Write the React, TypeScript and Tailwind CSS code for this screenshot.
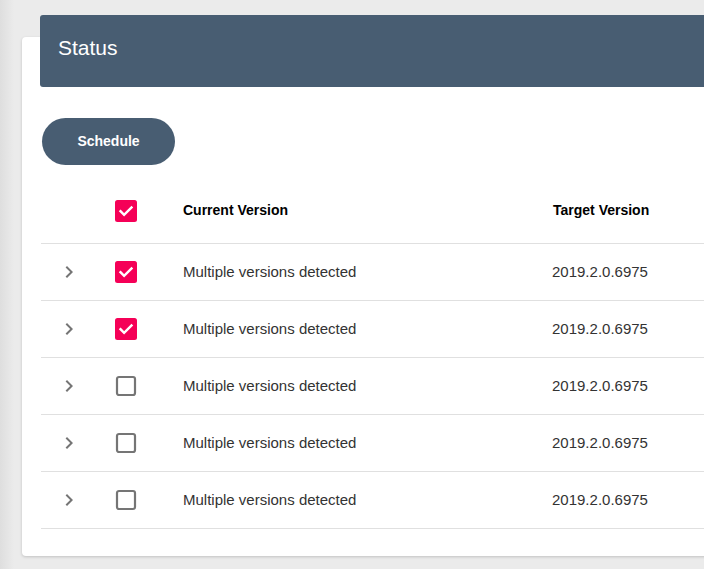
import React from 'react';

interface Row {
  current: string;
  target: string;
  checked: boolean;
}

const rows: Row[] = [
  { current: 'Multiple versions detected', target: '2019.2.0.6975', checked: true },
  { current: 'Multiple versions detected', target: '2019.2.0.6975', checked: true },
  { current: 'Multiple versions detected', target: '2019.2.0.6975', checked: false },
  { current: 'Multiple versions detected', target: '2019.2.0.6975', checked: false },
  { current: 'Multiple versions detected', target: '2019.2.0.6975', checked: false },
];

function CheckBox({ checked }: { checked: boolean }) {
  if (checked) {
    return (
      <svg width="22" height="22" viewBox="0 0 22 22">
        <rect x="0" y="0" width="22" height="22" rx="2.5" fill="#f50057" />
        <path d="M5.5 11.2l3.6 3.6 7.4-7.4" fill="none" stroke="#fff" strokeWidth="2.4" strokeLinecap="square" />
      </svg>
    );
  }
  return (
    <svg width="22" height="22" viewBox="0 0 22 22">
      <rect x="2" y="2" width="18" height="18" rx="2" fill="none" stroke="#757575" strokeWidth="2.2" />
    </svg>
  );
}

function Chevron() {
  return (
    <svg width="24" height="24" viewBox="0 0 24 24" fill="#757575">
      <path d="M10 6L8.59 7.41 13.17 12l-4.58 4.59L10 18l6-6z" />
    </svg>
  );
}

export default function App() {
  return (
    <div
      className="w-[704px] h-[569px] overflow-hidden bg-[linear-gradient(to_right,#dedede,#ebebeb_14px)] pt-[37px] pl-[22px]"
      style={{ fontFamily: '"Liberation Sans", Arial, sans-serif' }}
    >
      <div className="flow-root w-[760px] h-[519px] bg-white rounded-[4px] shadow-[0_1px_3px_rgba(0,0,0,0.18)] pl-[18px]">
        <div className="-mt-[22px] h-[72px] bg-[#485d72] rounded-[3px] flex items-center pl-[18px] pb-[6px]">
          <h1 className="text-white text-[21px]">Status</h1>
        </div>

        <button className="mt-[31px] ml-[2px] w-[133px] h-[47px] rounded-full bg-[#485d72] text-white text-[14px] font-bold">
          Schedule
        </button>

        <div className="mt-[21px] ml-[1px]">
          <div className="flex items-center h-[58px] pb-[8px] border-b border-[#e0e0e0]">
            <div className="w-[60px]" />
            <div className="w-[82px] pl-[14px] flex">
              <CheckBox checked />
            </div>
            <div className="w-[370px] text-[14px] font-bold text-black">Current Version</div>
            <div className="text-[14px] font-bold text-black">Target Version</div>
          </div>
          {rows.map((row, i) => (
            <div key={i} className="flex items-center h-[57px] border-b border-[#e0e0e0]">
              <div className="w-[60px] pl-[16px] flex">
                <Chevron />
              </div>
              <div className="w-[82px] pl-[14px] flex">
                <CheckBox checked={row.checked} />
              </div>
              <div className="w-[369px] text-[15px] text-[#333]">{row.current}</div>
              <div className="text-[15px] text-[#333]">{row.target}</div>
            </div>
          ))}
        </div>
      </div>
    </div>
  );
}
